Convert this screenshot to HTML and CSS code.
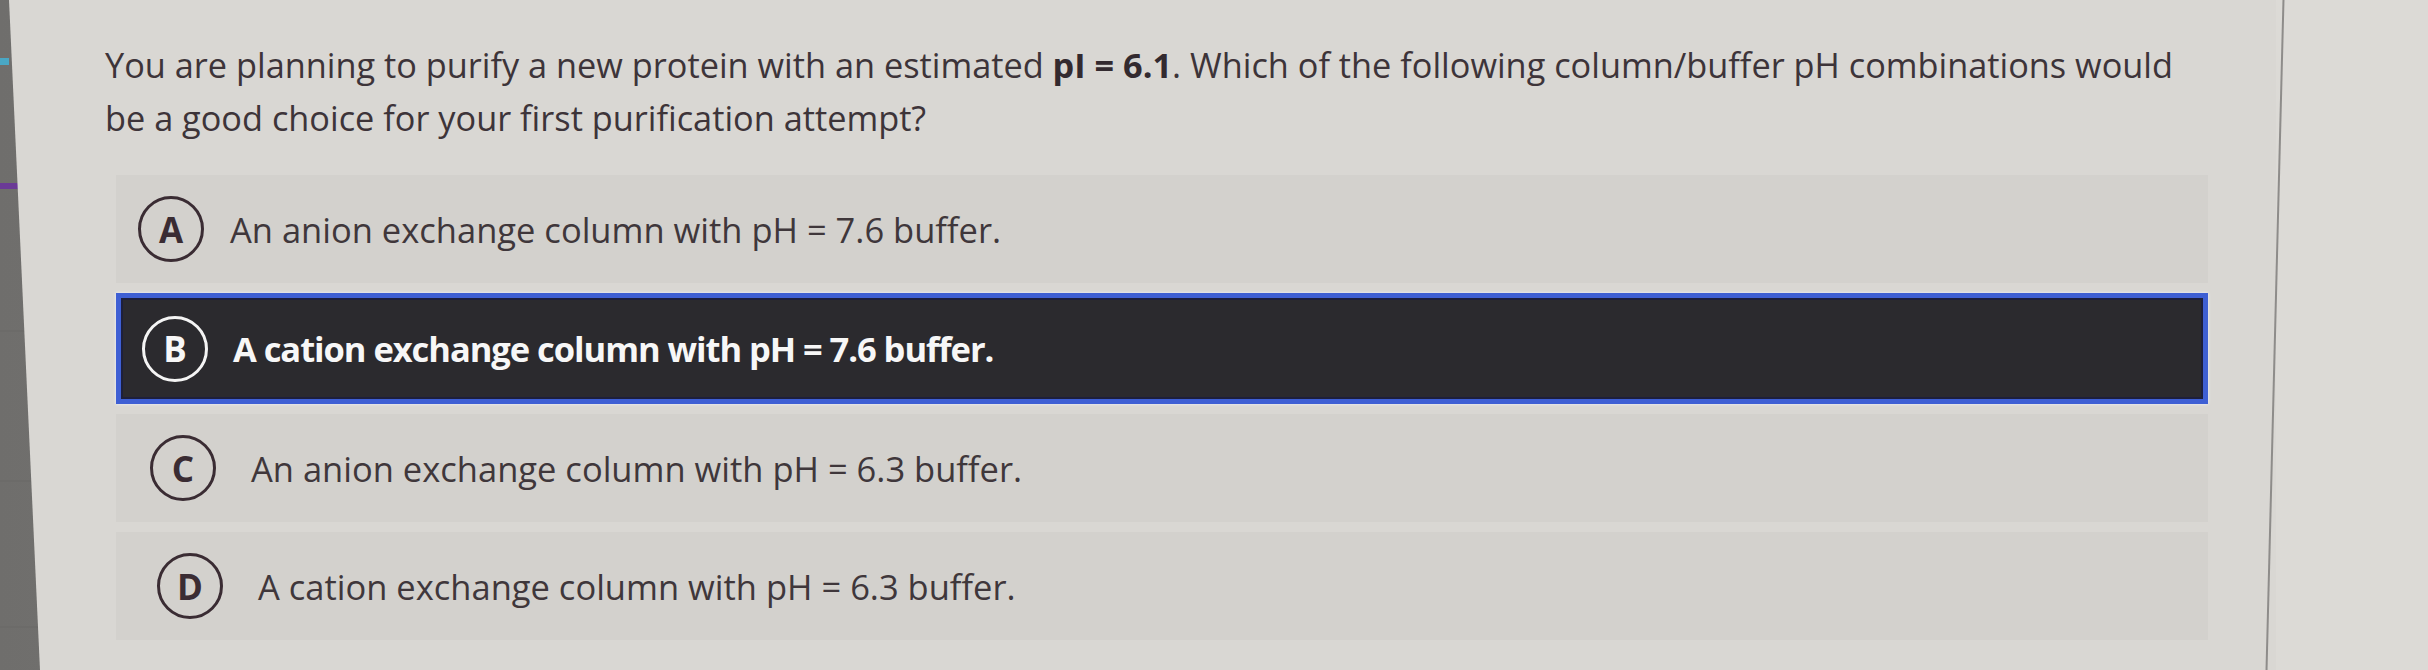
FILE: index.html
```html
<!DOCTYPE html>
<html lang="en">
<head>
<meta charset="utf-8">
<title>Question</title>
<link rel="stylesheet" href="styles.css">
</head>
<body>
<div class="stage">
  <span class="mark mark-cyan"></span>
  <span class="mark mark-purple"></span>
  <span class="mark mark-tick t1"></span>
  <span class="mark mark-tick t2"></span>
  <span class="mark mark-tick t3"></span>
  <div class="screen">
    <main class="content">
      <p class="question">You are planning to purify a new protein with an estimated <strong>pI = 6.1</strong>. Which of the following column/buffer pH combinations would be a good choice for your first purification attempt?</p>
      <div class="options">
        <div class="option opt-a"><span class="badge">A</span><span class="label">An anion exchange column with pH = 7.6 buffer.</span></div>
        <div class="option opt-b selected"><span class="badge">B</span><span class="label">A cation exchange column with pH = 7.6 buffer.</span></div>
        <div class="option opt-c"><span class="badge">C</span><span class="label">An anion exchange column with pH = 6.3 buffer.</span></div>
        <div class="option opt-d"><span class="badge">D</span><span class="label">A cation exchange column with pH = 6.3 buffer.</span></div>
      </div>
    </main>
    <div class="divider"></div>
    <aside class="aside"></aside>
  </div>
</div>
</body>
</html>
```
FILE: styles.css
```css
html, body {
  margin: 0;
  padding: 0;
}
body {
  font-family: "Open Sans", "Noto Sans", sans-serif;
  background: #7e7d7b;
}
.stage {
  position: relative;
  width: 2428px;
  height: 670px;
  overflow: hidden;
  background: linear-gradient(90deg, #6f6e6c 0%, #8d8c8a 60%, #9a9997 100%);
}
.mark {
  position: absolute;
  left: 0;
  display: block;
}
.mark-cyan {
  top: 58px;
  width: 9px;
  height: 7px;
  background: #4aa7c4;
}
.mark-purple {
  top: 183px;
  width: 22px;
  height: 6px;
  background: #6b3a96;
}
.mark-tick {
  height: 2px;
  background: #6c6b69;
}
.t1 { top: 330px; width: 28px; }
.t2 { top: 480px; width: 34px; }
.t3 { top: 626px; width: 38px; }
.screen {
  display: flex;
  height: 100%;
  background: #d9d7d3;
  clip-path: polygon(9px 0, 100% 0, 100% 100%, 40px 100%);
}
.content {
  flex: 0 0 2274px;
  box-sizing: border-box;
  padding: 38px 0 0 105px;
}
.question {
  margin: 0;
  width: 2112px;
  font-size: 34.3px;
  line-height: 53px;
  color: #3d3439;
}
.question strong {
  font-weight: 700;
  color: #332a2f;
}
.options {
  display: flex;
  flex-direction: column;
  gap: 10px;
  margin: 31px 0 0 11px;
  width: 2092px;
}
.option {
  display: flex;
  align-items: center;
  height: 108px;
  box-sizing: border-box;
  background: #d3d1cd;
  color: #3f373b;
  font-size: 34.5px;
}
.badge {
  flex: 0 0 auto;
  width: 66px;
  height: 66px;
  box-sizing: border-box;
  border: 3px solid #3a2c33;
  border-radius: 50%;
  display: flex;
  align-items: center;
  justify-content: center;
  font-weight: 700;
  font-size: 35px;
  letter-spacing: 0;
  color: #3a2c33;
}
.opt-a { padding-left: 22px; gap: 26px; }
.opt-b { padding-left: 21px; gap: 25px; height: 111px; }
.opt-c { padding-left: 34px; gap: 35px; }
.opt-d { padding-left: 41px; gap: 35px; }
.option.selected {
  background: #2b2a2e;
  border: 5px solid #3e5fd4;
  box-shadow: inset 0 0 0 2px #1d1f3c, 0 0 3px #f2f4ff;
  color: #f7f7f7;
  font-weight: 700;
}
.option.selected .label {
  letter-spacing: -1.05px;
}
.option.selected .badge {
  border-color: #f4f4f4;
  color: #f7f7f7;
}
.divider {
  flex: 0 0 2px;
  background: #8e8c8a;
  transform: skewX(-1.45deg);
}
.aside {
  flex: 1;
  background: #dcdad6;
}
```
